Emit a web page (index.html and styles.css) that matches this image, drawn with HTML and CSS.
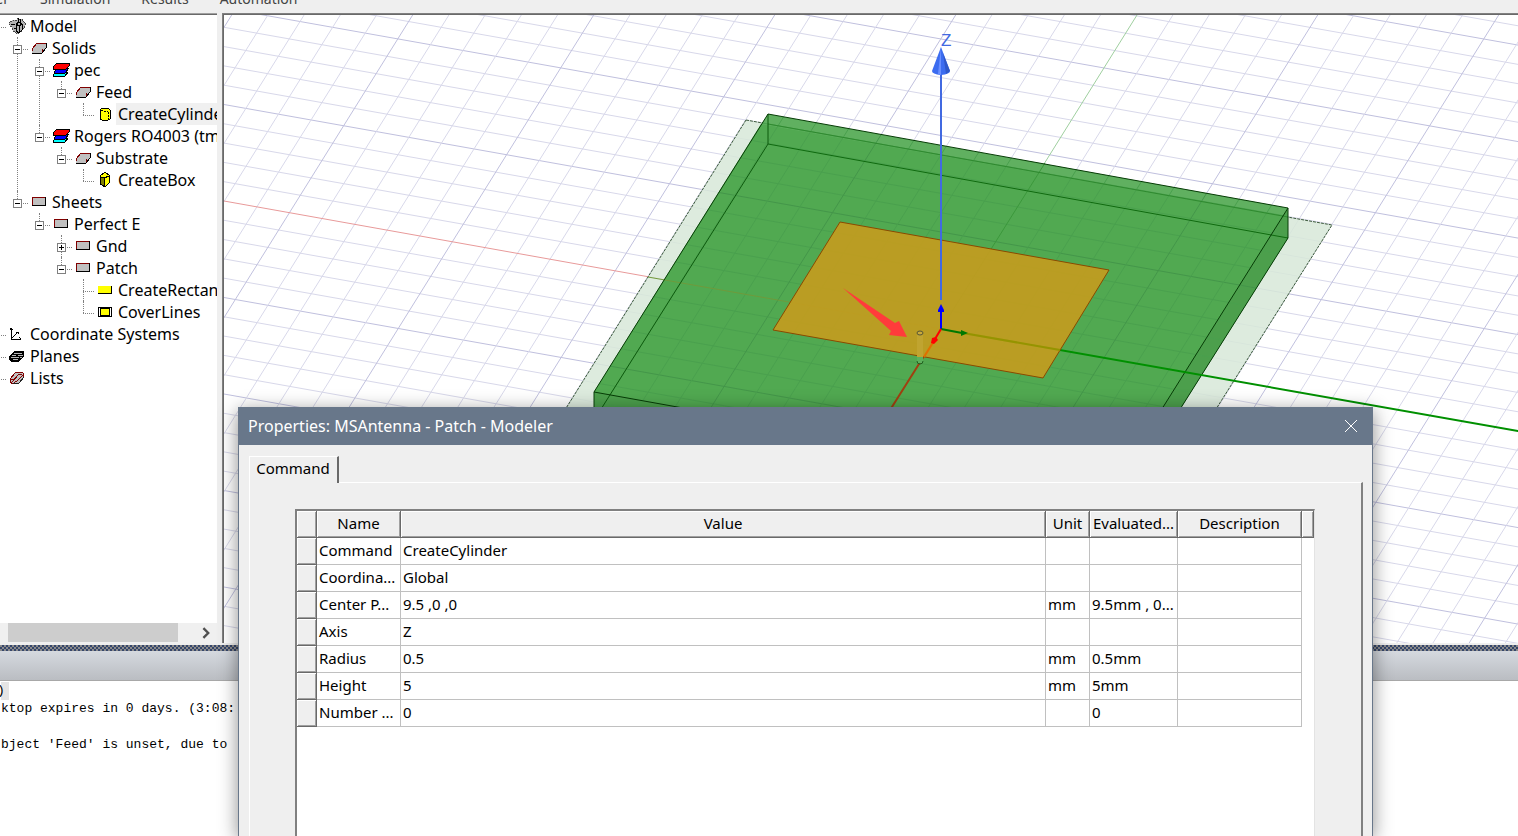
FILE: index.html
```html
<!DOCTYPE html>
<html lang="en">
<head>
<meta charset="utf-8">
<title>MSAntenna - Modeler</title>
<link rel="stylesheet" href="styles.css">
<script src="grid.js" defer></script>
</head>
<body>

<svg class="sprites" aria-hidden="true">
	<symbol id="i-model" viewBox="0 0 18 18">
		<path d="M2 5l3-2 3 1 2-3 2 2 2-1 2 3 2 2-2 4-3 4-4 2-4-3-1-4-3-2z" fill="#b4b4b4" stroke="#444" stroke-dasharray="2 1"/>
		<path d="M8 7l3-2 3 2v6l-3 3-3-2zM8 7l3 2 3-2M11 9v7M10 1l1 4M3 7l4 1M12 2v4M6 12l2-1" fill="none" stroke="#000"/>
	</symbol>
	<symbol id="i-solid" viewBox="0 0 18 18">
		<path d="M2 13v-3l5-6h9v5l-4 5H2z" fill="#c0c0c0"/>
		<path d="M2 12v-2l5-6h9M12 10v4" fill="none" stroke="#800000"/>
		<path d="M2 14h10l4-5V4" fill="none" stroke="#000"/>
	</symbol>
	<symbol id="i-material" viewBox="0 0 18 18">
		<path d="M1 14l4-3h11l-3 4H1z" fill="#0ff" stroke="#000"/>
		<path d="M2 11l4-4h11l-4 5H2z" fill="#00f" stroke="#000"/>
		<path d="M1 6l4-4h12v3l-3 3H1z" fill="#f00" stroke="#000"/>
	</symbol>
	<symbol id="i-cylinder" viewBox="0 0 18 18">
		<path d="M4 5l2-2h6l2 2v9l-2 1H6l-2-1z" fill="#ff0" stroke="#000"/>
		<path d="M5 5l2 1h5M12 7v7" fill="none" stroke="#000" stroke-dasharray="2 1"/>
	</symbol>
	<symbol id="i-box" viewBox="0 0 18 18">
		<path d="M4 5l5-4 4 3v8l-4 4-5-3z" fill="#ff0" stroke="#000"/>
		<path d="M4 6l4 1v8l-4-2z" fill="#808000" stroke="#000"/>
		<path d="M8 7l5-2" stroke="#000"/>
	</symbol>
	<symbol id="i-sheet" viewBox="0 0 18 18">
		<path d="M2 4h14v9H2z" fill="#000"/>
		<path d="M2 4h13v8H2z" fill="#800000"/>
		<path d="M3 5h12v7H3z" fill="#c0c0c0"/>
	</symbol>
	<symbol id="i-rect" viewBox="0 0 18 18">
		<path d="M2 5h14v8H2z" fill="#000"/>
		<path d="M2 5h13v7H2z" fill="#ff0"/>
	</symbol>
	<symbol id="i-cover" viewBox="0 0 18 18">
		<path d="M2 4h14v10H2z" fill="#000"/>
		<path d="M3 5h12v8H3z" fill="#fff"/>
		<path d="M4 4h10v10H4z" fill="#000"/>
		<path d="M5 6h8v6H5z" fill="#ff0"/>
	</symbol>
	<symbol id="i-axes" viewBox="0 0 18 18">
		<path d="M3 3v11h10M4 13l6-6M2 5l1-2 2 2M11 12l2 2-2 1M8 7h2v2" fill="none" stroke="#000"/>
	</symbol>
	<symbol id="i-planes" viewBox="0 0 18 18">
		<path d="M1 10l5-6h10v5l-5 6H3l-2-2z" fill="#000"/>
		<path d="M6 6h8M4 8h4M10 8h5M3 10h8M5 12h5M12 10h2" stroke="#b8b8b8"/>
	</symbol>
	<symbol id="i-lists" viewBox="0 0 18 18">
		<path d="M2 10l5-6 4-1 4 1 1 4-5 6-6 1-3-2z" fill="#c0c0c0" stroke="#800000"/>
		<path d="M4 13l7-8M8 13l7-7M2 10h3M6 14l2-2M11 5h3" fill="none" stroke="#800000"/>
		<path d="M5 15l6-1 5-6" fill="none" stroke="#222"/>
	</symbol>
</svg>

<div class="app">
	<nav class="menu">
		<a class="menu__first" href="#">er</a>
		<a href="#">Simulation</a>
		<a href="#">Results</a>
		<a href="#">Automation</a>
	</nav>

	<div class="workspace">
		<aside class="sidebar">
			<ul class="tree">
				<li>
					<div class="row"><span class="branch"></span><svg><use href="#i-model"/></svg><span class="label">Model</span></div>
					<ul>
						<li>
							<div class="row"><span class="branch"><button class="minus" aria-label="Collapse Solids"></button></span><svg><use href="#i-solid"/></svg><span class="label">Solids</span></div>
							<ul>
								<li>
									<div class="row"><span class="branch"><button class="minus" aria-label="Collapse pec"></button></span><svg><use href="#i-material"/></svg><span class="label">pec</span></div>
									<ul>
										<li>
											<div class="row"><span class="branch"><button class="minus" aria-label="Collapse Feed"></button></span><svg><use href="#i-solid"/></svg><span class="label">Feed</span></div>
											<ul>
												<li><div class="row row--selected"><span class="branch"></span><svg><use href="#i-cylinder"/></svg><span class="label">CreateCylinder</span></div></li>
											</ul>
										</li>
									</ul>
								</li>
								<li>
									<div class="row"><span class="branch"><button class="minus" aria-label="Collapse Rogers"></button></span><svg><use href="#i-material"/></svg><span class="label">Rogers RO4003 (tm)</span></div>
									<ul>
										<li>
											<div class="row"><span class="branch"><button class="minus" aria-label="Collapse Substrate"></button></span><svg><use href="#i-solid"/></svg><span class="label">Substrate</span></div>
											<ul>
												<li><div class="row"><span class="branch"></span><svg><use href="#i-box"/></svg><span class="label">CreateBox</span></div></li>
											</ul>
										</li>
									</ul>
								</li>
							</ul>
						</li>
						<li>
							<div class="row"><span class="branch"><button class="minus" aria-label="Collapse Sheets"></button></span><svg><use href="#i-sheet"/></svg><span class="label">Sheets</span></div>
							<ul>
								<li>
									<div class="row"><span class="branch"><button class="minus" aria-label="Collapse Perfect E"></button></span><svg><use href="#i-sheet"/></svg><span class="label">Perfect E</span></div>
									<ul>
										<li><div class="row"><span class="branch"><button class="minus plus" aria-label="Expand Gnd"></button></span><svg><use href="#i-sheet"/></svg><span class="label">Gnd</span></div></li>
										<li>
											<div class="row"><span class="branch"><button class="minus" aria-label="Collapse Patch"></button></span><svg><use href="#i-sheet"/></svg><span class="label">Patch</span></div>
											<ul>
												<li><div class="row"><span class="branch"></span><svg><use href="#i-rect"/></svg><span class="label">CreateRectangle</span></div></li>
												<li><div class="row"><span class="branch"></span><svg><use href="#i-cover"/></svg><span class="label">CoverLines</span></div></li>
											</ul>
										</li>
									</ul>
								</li>
							</ul>
						</li>
					</ul>
				</li>
				<li><div class="row"><span class="branch"></span><svg><use href="#i-axes"/></svg><span class="label">Coordinate Systems</span></div></li>
				<li><div class="row"><span class="branch"></span><svg><use href="#i-planes"/></svg><span class="label">Planes</span></div></li>
				<li><div class="row"><span class="branch"></span><svg><use href="#i-lists"/></svg><span class="label">Lists</span></div></li>
			</ul>
			<div class="scrollbar">
				<div class="scrollbar__thumb"></div>
				<button class="scrollbar__next" aria-label="Scroll right"><svg viewBox="0 0 10 10"><path d="M2 1l4 4-4 4" fill="none" stroke="#505050" stroke-width="2"/></svg></button>
			</div>
		</aside>

		<main class="viewport">
			<svg class="scene">
				<clipPath id="solid-clip">
					<path d="M768 114L1288 208V238L1119 506H594V392z"/>
				</clipPath>
				<!-- scene coordinates start 224,15 away from the corner of the pane -->
				<g transform="translate(-224 -15)">
					<g id="grid"></g>
					<path d="M224 201L941 329" stroke="#e89a9a"/>
					<path d="M941 329L1137 15" stroke="#9fcf9f"/>

					<!-- ground -->
					<path d="M746 120L1332 225L1155 506H505z" fill="#d7e8d8" fill-opacity=".85"/>
					<path d="M746 120L1332 225L1155 506M746 120L505 506" fill="none" stroke="#3c5a3c" stroke-dasharray="3 1"/>

					<!-- substrate -->
					<path d="M768 114L1288 208V238L1119 506H594V392z" fill="#5aad5a" fill-opacity=".96"/>
					<path d="M761 124L1288 217V208L1101 506H594V392z" fill="#50a850" fill-opacity=".9"/>
					<path d="M1288 208V238L1119 506H1101z" fill="#4c9f4c"/>
					<path d="M594 392L900 447V506H594z" fill="#4c9f4c"/>
					<g id="grid-shade" clip-path="url(#solid-clip)"></g>
					<path d="M648 277L941 329" stroke="#6f9a3c"/>
					<path d="M1045 163L941 329" stroke="#3c983c"/>
					<path d="M768 124L1288 217" stroke="#2f8a2f" fill="none"/>
					<path d="M768 144L1288 238" stroke="#0f6a0f" fill="none"/>
					<path d="M768 114V144L540 506" stroke="#0d5a0d" fill="none"/>
					<path d="M594 506V392L768 114L1288 208V238L1119 506M1288 208L1101 506M594 392L900 447" fill="none" stroke="#063c06"/>

					<!-- global axes under the patch -->
					<path d="M941 329L824 515" stroke="#a04010" stroke-width="2"/>
					<path d="M941 329L1518 431L1900 499" stroke="#009000" stroke-width="2"/>

					<!-- patch -->
					<path d="M840 222L1109 270L1043 378L773 330z" fill="#c09c20" fill-opacity=".94" stroke="#8a4a00"/>
					<path d="M963 333L1060 350" stroke="#959400" stroke-width="2"/>
					<path d="M934 341L924 357" stroke="#e07000" stroke-width="2"/>

					<!-- feed -->
					<path d="M917 333h6v30h-6z" fill="#c0a430"/>
					<path d="M917 357h6v6h-6z" fill="#5cb05c"/>
					<ellipse cx="920" cy="333" rx="3" ry="2" fill="#c9a93c" stroke="#555533"/>
					<path d="M917 361q0 3 3 3t3-3" fill="none" stroke="#206020"/>

					<!-- axis triad -->
					<path d="M941 300V72" stroke="#4169e1" stroke-width="2"/>
					<path d="M941 47L932 71q0 3 9 4q9-1 9-4z" fill="#3c6cf0"/>
					<path d="M941 47L938 74l3 1z" fill="#6a90ff"/>
					<path d="M943 53L950 71l-4 3z" fill="#2f58c8"/>
					<text class="axis-name" x="941" y="46">Z</text>
					<path d="M941 329V308" stroke="#00f" stroke-width="2"/>
					<path d="M941 304l-3 6v2h6v-2z" fill="#00f"/>
					<path d="M941 329L962 333" stroke="#007800" stroke-width="2"/>
					<path d="M961 330l7 3-7 3z" fill="#007800"/>
					<path d="M941 329L935 339" stroke="#f00" stroke-width="2"/>
					<path d="M932 338l4-1 2 3-4 4-3-1z" fill="#f00"/>

					<!-- marker arrow -->
					<path d="M843 288L895 323L899 321L907 337L889 335L891 331z" fill="#ff3b3b"/>
				</g>
			</svg>
		</main>
	</div>

	<div class="splitter"></div>
	<div class="messages__bar"></div>
	<div class="messages">
		<p><span class="messages__hit">)</span></p>
		<p>ktop expires in 0 days. (3:08:</p>
		<p>&nbsp;</p>
		<p>bject 'Feed' is unset, due to</p>
	</div>
</div>

<section class="dialog" role="dialog" aria-labelledby="dialog-title">
	<header class="dialog__title">
		<h1 id="dialog-title">Properties: MSAntenna - Patch - Modeler</h1>
		<button class="dialog__close" aria-label="Close"><svg viewBox="0 0 12 12"><path d="M0 0L12 12M12 0L0 12" stroke="#fff"/></svg></button>
	</header>
	<div class="dialog__body">
		<button class="tab">Command</button>
		<div class="panel">
			<div class="sheet">
				<table>
					<colgroup>
						<col class="c-sel"><col class="c-name"><col><col class="c-unit"><col class="c-eval"><col class="c-desc"><col class="c-fill">
					</colgroup>
					<thead>
						<tr><th></th><th>Name</th><th>Value</th><th>Unit</th><th>Evaluated...</th><th>Description</th><th></th></tr>
					</thead>
					<tbody>
						<tr><th></th><td>Command</td><td>CreateCylinder</td><td></td><td></td><td></td></tr>
						<tr><th></th><td>Coordina...</td><td>Global</td><td></td><td></td><td></td></tr>
						<tr><th></th><td>Center P...</td><td>9.5 ,0 ,0</td><td>mm</td><td>9.5mm , 0...</td><td></td></tr>
						<tr><th></th><td>Axis</td><td>Z</td><td></td><td></td><td></td></tr>
						<tr><th></th><td>Radius</td><td>0.5</td><td>mm</td><td>0.5mm</td><td></td></tr>
						<tr><th></th><td>Height</td><td>5</td><td>mm</td><td>5mm</td><td></td></tr>
						<tr><th></th><td>Number ...</td><td>0</td><td></td><td>0</td><td></td></tr>
					</tbody>
				</table>
			</div>
		</div>
	</div>
</section>

</body>
</html>
```

FILE: grid.js
```js
// drawing grid: two families of parallel lines, every fifth one darker
const SVG = 'http://www.w3.org/2000/svg'
const grid = document.getElementById('grid')
const shade = document.getElementById('grid-shade')

function addLine(parent, x1, y1, x2, y2, name) {
	const l = document.createElementNS(SVG, 'line')
	l.setAttribute('x1', x1)
	l.setAttribute('y1', y1)
	l.setAttribute('x2', x2)
	l.setAttribute('y2', y2)
	l.setAttribute('class', name)
	parent.appendChild(l)
}

function gridLine(k, x1, y1, x2, y2) {
	// k = 0 is an axis, it has its own colour
	if (k === 0) return
	const name = k % 5 === 0 ? 'grid-major' : 'grid-minor'
	addLine(grid, x1, y1, x2, y2, name)
	addLine(shade, x1, y1, x2, y2, name)
}

for (let k = -40; k <= 60; k++) {
	const y = 201 + k * 19.3
	gridLine(k, 224, y, 2624, y + 2400 * 0.1778)
}
for (let k = -30; k <= 60; k++) {
	const x = 1136.7 + k * 36.2
	gridLine(k, x, 15, x - 1000 * 0.6235, 1015)
}
```

FILE: styles.css
```css
* {
	box-sizing: border-box;
}

body {
	margin: 0;
	height: 100vh;
	overflow: hidden;
	position: relative;
	background-color: #efefef;
	color: #000;
	font-family: "Noto Sans", "Open Sans", sans-serif;
	font-size: 15px;
	line-height: 22px;
}

button {
	border: none;
	padding: 0;
	font: inherit;
	color: inherit;
}

ul {
	list-style: none;
	margin: 0;
	padding: 0;
}

.sprites {
	display: none;
}

.app {
	display: flex;
	flex-direction: column;
	height: 100%;
}

/* menu */
.menu {
	display: flex;
	flex: none;
	align-items: flex-end;
	gap: 31px;
	height: 13px;
	padding-bottom: 3px;
	overflow: hidden;
}

.menu a {
	color: #444;
	font-size: 14px;
	text-decoration: none;
}

.menu__first {
	width: 9px;
	direction: rtl;
}

/* model tree */
.workspace {
	display: flex;
	flex: 1;
	min-height: 0;
	gap: 5px;
	padding-bottom: 2px;
}

.sidebar {
	display: flex;
	flex: none;
	flex-direction: column;
	width: 217px;
	border-top: 1px solid #a0a0a0;
	box-shadow: inset 0 1px #696969;
	padding-top: 1px;
	background-color: #fff;
}

.tree {
	flex: 1;
	margin-left: -14px;
	overflow: hidden;
	font-size: 16px;
}

.tree ul {
	padding-left: 22px;
}

.tree li {
	position: relative;
}

.tree li::before {
	content: "";
	position: absolute;
	left: 9px;
	top: 0;
	bottom: 0;
	border-left: 1px dotted #808080;
}

.tree li:last-child::before {
	bottom: auto;
	height: 12px;
}

.row {
	display: flex;
	align-items: center;
	height: 22px;
	white-space: nowrap;
}

.row svg {
	flex: none;
	width: 18px;
	height: 18px;
	margin-right: 2px;
	shape-rendering: crispEdges;
}

.row--selected .label {
	background-color: #f0f0f0;
}

.label {
	flex: 1;
	padding-left: 2px;
	overflow: hidden;
}

.branch {
	display: flex;
	flex: none;
	align-items: center;
	width: 22px;
	height: 22px;
	padding: 2px 0 0 5px;
	background: repeating-linear-gradient(to right, #808080 0 1px, transparent 1px 2px) 9px 12px / 12px 1px no-repeat;
}

.minus {
	position: relative;
	width: 9px;
	height: 9px;
	border: 1px solid #808080;
	background: linear-gradient(#000, #000) center / 5px 1px no-repeat #fff;
}

.plus {
	background: linear-gradient(#000, #000) center / 5px 1px no-repeat, linear-gradient(#000, #000) center / 1px 5px no-repeat #fff;
}

.scrollbar {
	display: flex;
	flex: none;
	justify-content: space-between;
	height: 20px;
	padding: 0 2px 1px 8px;
	background-color: #f0f0f0;
}

.scrollbar__thumb {
	width: 170px;
	background-color: #cdcdcd;
}

.scrollbar__next {
	width: 14px;
	background: none;
}

.scrollbar__next svg {
	display: block;
	width: 12px;
	height: 12px;
}

/* 3d view */
.viewport {
	flex: 1;
	min-width: 0;
	border: solid #808080;
	border-width: 1px 0 0 1px;
	box-shadow: inset 1px 1px #696969;
	padding: 1px 0 0 1px;
	background-color: #fff;
	overflow: hidden;
}

.scene {
	display: block;
	width: 100%;
	height: 100%;
}

.grid-minor {
	stroke: #d8d8ea;
}

.grid-major {
	stroke: #c0c0de;
}

#grid-shade .grid-minor {
	stroke: #4aa04e;
}

#grid-shade .grid-major {
	stroke: #44964a;
}

.axis-name {
	fill: #4169e1;
	font-family: "Liberation Sans", sans-serif;
	font-size: 17px;
}

/* message log */
.splitter {
	flex: none;
	height: 6px;
	background: repeating-conic-gradient(#35466b 0 25%, #8a8a8a 0 50%) 0 0 / 4px 4px;
}

.messages__bar {
	flex: none;
	height: 30px;
	border-bottom: 1px solid #a8a8a8;
	background-image: linear-gradient(#d5d9df, #babdc2);
}

.messages {
	flex: none;
	height: 155px;
	padding-top: 1px;
	background-color: #fff;
	font-family: "Liberation Mono", monospace;
	font-size: 13px;
	line-height: 18px;
	white-space: nowrap;
}

.messages p {
	margin: 0;
	padding-left: 1px;
}

.messages__hit {
	display: inline-block;
	width: 8px;
	background-color: #e4e4e4;
	text-indent: -4px;
}

/* properties dialog */
.dialog {
	display: flex;
	flex-direction: column;
	position: absolute;
	left: 238px;
	right: 145px;
	top: 407px;
	bottom: 0;
	border: solid #68778a;
	border-width: 0 1px;
	background-color: #efefef;
	box-shadow: 0 4px 18px rgba(0, 0, 0, 0.45);
}

.dialog__title {
	display: flex;
	flex: none;
	align-items: center;
	justify-content: space-between;
	height: 38px;
	padding: 0 15px 0 9px;
	background-color: #68778a;
	color: #fff;
}

.dialog__title h1 {
	margin: 0;
	font-size: 16px;
	font-weight: normal;
}

.dialog__close {
	background: none;
}

.dialog__close svg {
	display: block;
	width: 12px;
	height: 12px;
}

.dialog__body {
	display: flex;
	flex: 1;
	flex-direction: column;
	min-height: 0;
	padding: 11px 9px 0 10px;
}

.tab {
	position: relative;
	align-self: flex-start;
	width: 90px;
	height: 27px;
	margin-bottom: -1px;
	border: solid;
	border-width: 1px 2px 0 1px;
	border-color: #fff #696969 #fff #fff;
	padding: 0 1px 4px 0;
	background-color: #efefef;
}

.panel {
	flex: 1;
	min-height: 0;
	border: solid;
	border-width: 1px 2px 0 1px;
	border-color: #fff #808080 #fff #fff;
	padding: 26px 46px 0 45px;
}

.sheet {
	height: 100%;
	border: solid;
	border-width: 2px 1px 0 2px;
	border-color: #808080 #e3e3e3 #fff #808080;
	background-color: #fff;
}

table {
	width: 100%;
	table-layout: fixed;
	border-spacing: 0;
}

th, td {
	height: 27px;
	border: solid #c0c0c0;
	border-width: 0 1px 1px 0;
	padding: 0 0 2px 2px;
	overflow: hidden;
	line-height: 22px;
	text-align: left;
	white-space: nowrap;
}

th {
	border-color: #696969;
	padding-left: 0;
	background-color: #efefef;
	box-shadow: inset 1px 1px #fff, inset -1px -1px #a0a0a0;
	font-weight: normal;
	text-align: center;
}

.c-sel {
	width: 20px;
}

.c-name {
	width: 84px;
}

.c-unit {
	width: 44px;
}

.c-eval {
	width: 88px;
}

.c-desc {
	width: 124px;
}

.c-fill {
	width: 12px;
}
```
